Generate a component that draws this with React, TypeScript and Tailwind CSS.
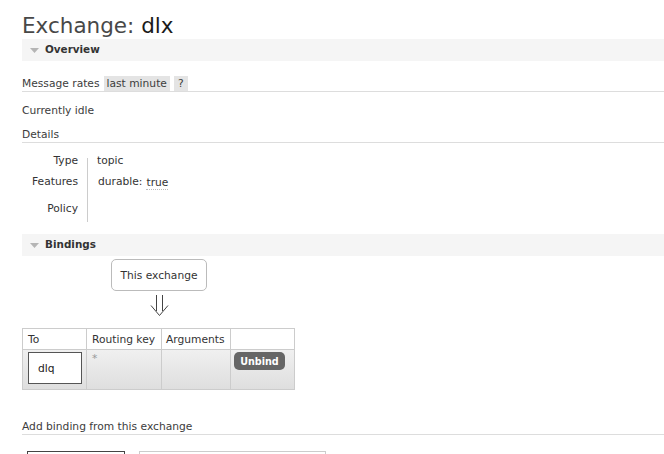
import React from 'react'

function SectionBar({ title }: { title: string }) {
  return (
    <div className="flex h-[22px] items-center bg-[#f5f5f5] pl-[8px]">
      <svg className="h-[5px] w-[9px]" viewBox="0 0 9 5">
        <path d="M0 0h9L4.5 5z" fill="#b5b5b5" />
      </svg>
      <span className="ml-[6px] text-[10.4px] font-bold text-[#333]">{title}</span>
    </div>
  )
}

function DoubleArrow() {
  return (
    <svg className="ml-[128px] h-[21px] w-[19px]" viewBox="0 0 19 21" fill="none" stroke="#444" strokeWidth={1}>
      <path d="M6.5 0v16M12.5 0v16" />
      <path d="M1 10.5l8.5 10 8.5-10" />
    </svg>
  )
}

export default function App() {
  return (
    <div
      className="w-[664px] h-[454px] overflow-hidden bg-white pl-[22px] text-[10.7px] text-[#3c3c3c]"
      style={{ fontFamily: '"DejaVu Sans", Verdana, sans-serif' }}
    >
      {/* Title */}
      <h1 className="pt-[13px] text-[21.5px] leading-[26px] font-normal text-[#484848]">
        Exchange: <span className="text-[#1a1a1a]">dlx</span>
      </h1>

      <SectionBar title="Overview" />

      {/* Message rates */}
      <div className="mt-[15px] flex h-[16px] items-start gap-[4px] border-b border-[#ddd] leading-[15px]">
        <span>Message rates</span>
        <span className="bg-[#e4e4e4] px-[3px]">last minute</span>
        <span className="bg-[#e4e4e4] px-[4px]">?</span>
      </div>

      <p className="mt-[11px] leading-[15px]">Currently idle</p>

      <div className="mt-[9px] h-[16px] border-b border-[#ddd] leading-[15px]">Details</div>

      {/* Details table */}
      <div className="mt-[10px] flex leading-[15px] text-[#333]">
        <div className="flex w-[65px] shrink-0 flex-col items-end pr-[9px]">
          <div className="h-[21px]">Type</div>
          <div className="h-[27px]">Features</div>
          <div className="h-[15px]">Policy</div>
        </div>
        <div className="mt-[5px] flex w-[200px] flex-col border-l border-[#ccc] pb-[6px] pl-[9px]">
          <div className="-mt-[5px] h-[21px]">topic</div>
          <div className="flex h-[27px] items-start">
            <span className="pl-[1px]">durable:</span>
            <span className="ml-[4px] mt-[2px] border-b border-dotted border-[#bbb] leading-[13px]">true</span>
          </div>
          <div className="h-[15px]" />
        </div>
      </div>

      <div className="mt-[12px]">
        <SectionBar title="Bindings" />
      </div>

      {/* Binding diagram */}
      <div className="ml-[89px] mt-[3px] h-[32px] w-[96px] rounded-[5px] border border-[#bbb] pt-[8px] text-center leading-[15px] text-[#333]">
        This exchange
      </div>
      <div className="mt-[4px]">
        <DoubleArrow />
      </div>

      <table className="mt-[12px] w-[273px] table-fixed border-collapse text-left leading-[15px] text-[#333]">
        <colgroup>
          <col className="w-[64px]" />
          <col className="w-[75px]" />
          <col className="w-[69px]" />
          <col className="w-[64px]" />
        </colgroup>
        <thead>
          <tr className="h-[21px] bg-white">
            <th className="border border-[#ccc] px-[5px] pt-[1px] font-normal">To</th>
            <th className="border border-[#ccc] px-[5px] pt-[1px] font-normal">Routing key</th>
            <th className="border border-[#ccc] px-[4px] pt-[1px] font-normal">Arguments</th>
            <th className="border border-[#ccc] px-[5px]" />
          </tr>
        </thead>
        <tbody>
          <tr className="h-[40px] bg-gradient-to-b from-[#f0f0f0] to-[#dedede]">
            <td className="border border-[#ccc] px-[5px] pt-[2px] align-top">
              <div className="flex h-[32px] w-[54px] items-center border border-[#555] bg-white pl-[9px] text-[#222]">
                dlq
              </div>
            </td>
            <td className="border border-[#ccc] px-[5px] pt-[1px] align-top text-[#999]">*</td>
            <td className="border border-[#ccc] px-[5px] align-top" />
            <td className="border border-[#ccc] pl-[3px] pt-[2px] align-top">
              <span className="inline-flex h-[18px] w-[51px] items-center justify-center rounded-[5px] bg-[#666] text-[9.6px] font-bold text-white">
                Unbind
              </span>
            </td>
          </tr>
        </tbody>
      </table>

      <div className="mt-[29px] h-[16px] border-b border-[#ddd] leading-[15px]">Add binding from this exchange</div>

      <div className="mt-[16px] flex">
        <div className="ml-[5px] h-[30px] w-[98px] border border-[#444]" />
        <div className="ml-[14px] h-[30px] w-[187px] border border-[#ccc]" />
      </div>
    </div>
  )
}
